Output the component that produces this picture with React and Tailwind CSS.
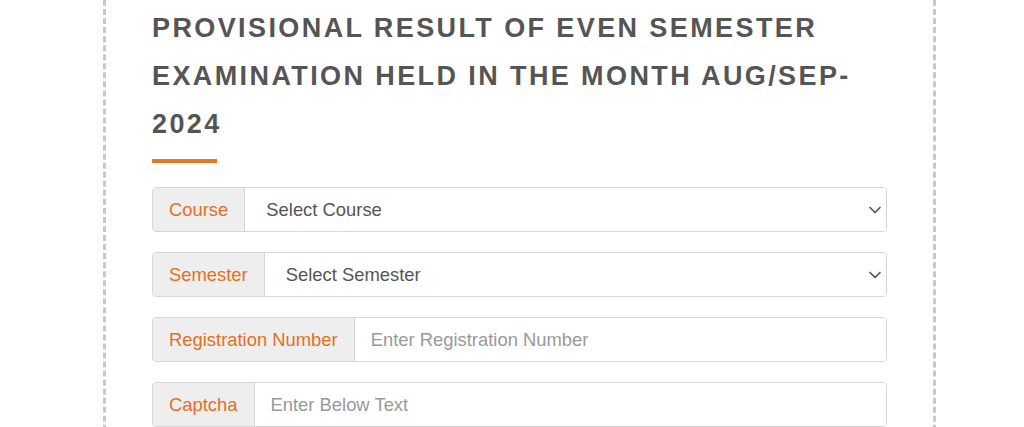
import { ChevronDown } from "lucide-react";

const font = { fontFamily: '"Liberation Sans", Arial, sans-serif' };

export default function App() {
  return (
    <div className="min-h-[427px] bg-white" style={font}>
      <div className="ml-[103px] w-[833px] border-x-[3px] border-dashed border-[#c8c8c8] px-[46px] pt-1 pb-10">
        <h1 className="text-[27px] leading-[48px] font-bold uppercase tracking-[2.4px] text-[#555]">
          Provisional Result of Even Semester Examination Held in the Month
          Aug/Sep-2024
        </h1>
        <div className="mt-[11px] h-1 w-[65px] bg-[#e87722]" />

        <div className="mt-6 flex flex-col gap-5">
          <SelectGroup label="Course" placeholder="Select Course" />
          <SelectGroup label="Semester" placeholder="Select Semester" />
          <InputGroup
            label="Registration Number"
            placeholder="Enter Registration Number"
          />
          <InputGroup label="Captcha" placeholder="Enter Below Text" />
        </div>
      </div>
    </div>
  );
}

function Addon({ children }) {
  return (
    <span className="flex items-center border-r border-[#d6d6d6] bg-[#eee] px-4 text-[18.4px] text-[#e4701e]">
      {children}
    </span>
  );
}

function SelectGroup({ label, placeholder }) {
  return (
    <div className="flex h-[45px] overflow-hidden rounded border border-[#d6d6d6]">
      <Addon>{label}</Addon>
      <div className="relative flex-1">
        <select
          className="h-full w-full appearance-none bg-white pl-[21px] text-[18.4px] text-[#555] outline-none"
          style={font}
          defaultValue=""
        >
          <option value="">{placeholder}</option>
        </select>
        <ChevronDown
          className="pointer-events-none absolute right-[1px] top-1/2 h-5 w-5 -translate-y-1/2 text-[#555]"
          strokeWidth={2}
        />
      </div>
    </div>
  );
}

function InputGroup({ label, placeholder }) {
  return (
    <div className="flex h-[45px] overflow-hidden rounded border border-[#d6d6d6]">
      <Addon>{label}</Addon>
      <input
        className="flex-1 bg-white px-4 text-[18.4px] text-[#555] outline-none placeholder:text-[#999]"
        style={font}
        placeholder={placeholder}
      />
    </div>
  );
}
